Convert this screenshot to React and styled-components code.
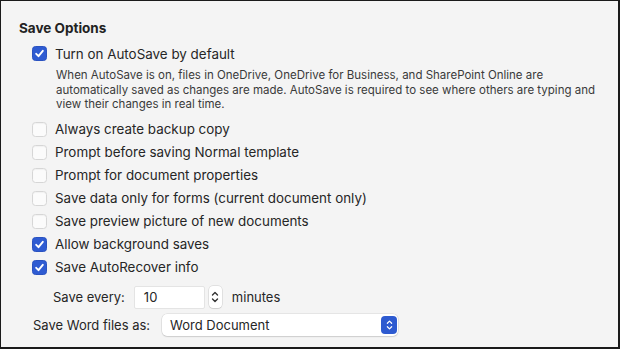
import React from 'react';
import styled, { createGlobalStyle } from 'styled-components';

const GlobalStyle = createGlobalStyle`
  html, body {
    margin: 0;
    padding: 0;
    background: #f4f4f4;
  }
  * { box-sizing: border-box; }
`;

const Frame = styled.div`
  width: 620px;
  height: 349px;
  border: 1px solid #1a1a1a;
  border-right-width: 2px;
  border-bottom-width: 2px;
  background: #f4f4f4;
  font-family: Inter, "Noto Sans", sans-serif;
  color: #262626;
  padding: 0 4px 0 18px;
  display: flex;
  flex-direction: column;
  overflow: hidden;
`;

const Title = styled.h2`
  margin: 19px 0 6px 0;
  font-size: 13.5px;
  font-weight: 700;
  color: #222;
  line-height: 16px;
`;

const OptionList = styled.div`
  display: flex;
  flex-direction: column;
  padding-left: 13px;
`;

const Row = styled.label`
  display: flex;
  align-items: center;
  gap: 8px;
  height: 23px;
  font-size: 13.4px;
  color: #262626;
`;

const Box = styled.span`
  width: 15px;
  height: 15px;
  border-radius: 3.5px;
  flex: none;
  display: flex;
  align-items: center;
  justify-content: center;
  background: ${p => (p.checked ? '#2e5bd2' : '#fbfbfb')};
  border: 1px solid ${p => (p.checked ? '#2a52c0' : '#d6d6d6')};
  box-shadow: ${p => (p.checked ? 'none' : 'inset 0 1px 1px rgba(0,0,0,0.04)')};
`;

const Help = styled.p`
  margin: 3px 0 6px 24px;
  font-size: 11.5px;
  line-height: 14.5px;
  color: #3a3a3a;
  width: 540px;
`;

const EveryRow = styled.div`
  display: flex;
  align-items: center;
  margin: 7px 0 0 34px;
  font-size: 13px;
  height: 24px;
`;

const FieldLabel = styled.span`
  margin-right: 9px;
`;

const NumberInput = styled.div`
  width: 71px;
  height: 23px;
  background: #fff;
  border: 1px solid #e4e4e4;
  border-radius: 2px;
  padding: 0 0 0 9px;
  display: flex;
  align-items: center;
  font-size: 13px;
`;

const Stepper = styled.span`
  width: 13px;
  height: 22px;
  margin: 0 10px 0 4px;
  border-radius: 4px;
  background: #fff;
  box-shadow: 0 0 0 0.5px rgba(0,0,0,0.15), 0 1px 1px rgba(0,0,0,0.08);
  display: flex;
  align-items: center;
  justify-content: center;
`;

const FormatRow = styled.div`
  display: flex;
  align-items: center;
  margin: 5px 0 0 14px;
  font-size: 13px;
  height: 24px;
`;

const Select = styled.div`
  width: 236px;
  height: 22px;
  margin-left: 12px;
  background: #fff;
  border-radius: 5px;
  box-shadow: 0 0 0 0.5px rgba(0,0,0,0.12), 0 1px 1.5px rgba(0,0,0,0.1);
  display: flex;
  align-items: center;
  justify-content: space-between;
  padding: 0 1px 0 8px;
  font-size: 13px;
`;

const SelectButton = styled.span`
  width: 16px;
  height: 18px;
  border-radius: 4px;
  background: #2d5ad0;
  display: flex;
  align-items: center;
  justify-content: center;
`;

const Divider = styled.div`
  margin: 11px 0 0 0;
  height: 1px;
  background: #dcdcdc;
`;

const Check = () => (
  <svg width="11" height="11" viewBox="0 0 11 11">
    <path d="M2.2 5.8 L4.5 8.2 L8.8 2.8" fill="none" stroke="#fff" strokeWidth="1.9" strokeLinecap="round" strokeLinejoin="round" />
  </svg>
);

const Chevrons = ({ color, w = 8, h = 14 }) => (
  <svg width={w} height={h} viewBox="0 0 8 14">
    <path d="M1.5 5 L4 2.5 L6.5 5" fill="none" stroke={color} strokeWidth="1.4" strokeLinecap="round" strokeLinejoin="round" />
    <path d="M1.5 9 L4 11.5 L6.5 9" fill="none" stroke={color} strokeWidth="1.4" strokeLinecap="round" strokeLinejoin="round" />
  </svg>
);

const Option = ({ checked, children }) => (
  <Row>
    <Box checked={checked}>{checked && <Check />}</Box>
    {children}
  </Row>
);

const options = [
  { label: 'Always create backup copy', checked: false },
  { label: 'Prompt before saving Normal template', checked: false },
  { label: 'Prompt for document properties', checked: false },
  { label: 'Save data only for forms (current document only)', checked: false },
  { label: 'Save preview picture of new documents', checked: false },
  { label: 'Allow background saves', checked: true },
  { label: 'Save AutoRecover info', checked: true },
];

export default function App() {
  return (
    <>
      <GlobalStyle />
      <Frame>
        <Title>Save Options</Title>
        <OptionList>
          <Option checked>Turn on AutoSave by default</Option>
          <Help>
            When AutoSave is on, files in OneDrive, OneDrive for Business, and SharePoint Online are
            automatically saved as changes are made. AutoSave is required to see where others are typing and
            view their changes in real time.
          </Help>
          {options.map(o => (
            <Option key={o.label} checked={o.checked}>{o.label}</Option>
          ))}
        </OptionList>
        <EveryRow>
          <FieldLabel>Save every:</FieldLabel>
          <NumberInput>10</NumberInput>
          <Stepper><Chevrons color="#333" /></Stepper>
          <span>minutes</span>
        </EveryRow>
        <FormatRow>
          <span>Save Word files as:</span>
          <Select>
            <span>Word Document</span>
            <SelectButton><Chevrons color="#fff" w={7} h={12} /></SelectButton>
          </Select>
        </FormatRow>
        <Divider />
      </Frame>
    </>
  );
}
